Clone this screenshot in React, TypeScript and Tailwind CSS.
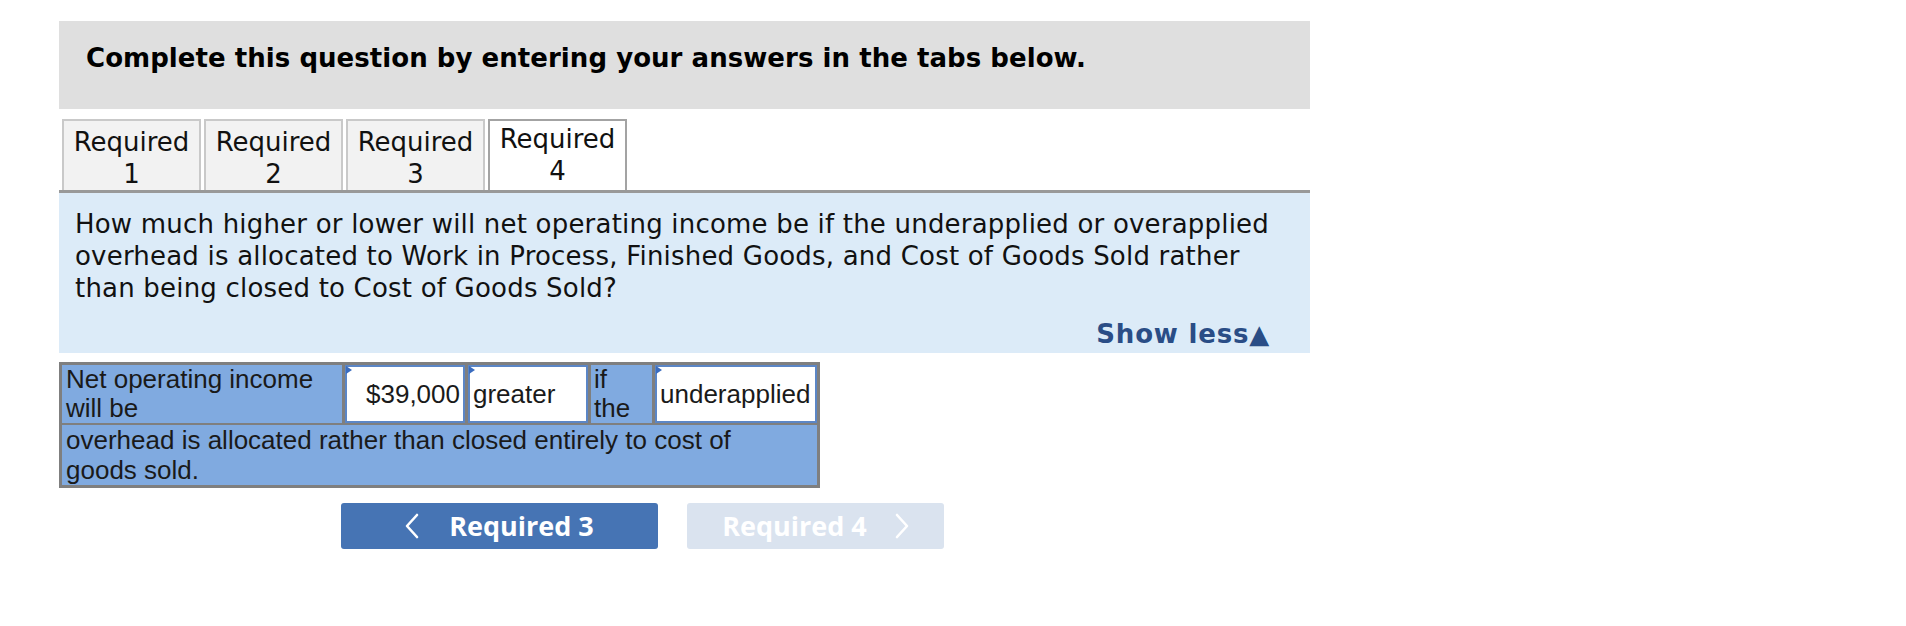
const tabs = [
    { label: 'Required', num: '1', active: false },
    { label: 'Required', num: '2', active: false },
    { label: 'Required', num: '3', active: false },
    { label: 'Required', num: '4', active: true },
];

function Chevron({ dir }: { dir: 'left' | 'right' }) {
    return (
        <svg width="14" height="26" viewBox="0 0 14 26" fill="none" stroke="currentColor" strokeWidth="2.6" strokeLinecap="round" strokeLinejoin="round">
            {dir === 'left' ? <polyline points="12,2 2,13 12,24" /> : <polyline points="2,2 12,13 2,24" />}
        </svg>
    );
}

function AnswerBox({ value, align = 'left', width }: { value: string; align?: 'left' | 'right'; width: string }) {
    return (
        <div
            className={`${width} relative bg-white border-2 border-[#5b86c6] flex items-center px-[3px] ${
                align === 'right' ? 'justify-end' : 'justify-start'
            }`}
        >
            <span className="absolute -left-[1px] -top-[1px] w-0 h-0 border-y-[4px] border-y-transparent border-l-[6px] border-l-[#3a6cbf]" />
            {value}
        </div>
    );
}

export default function App() {
    return (
        <div className="w-[1906px] h-[626px] bg-white font-['DejaVu_Sans',Verdana,sans-serif] text-[#111]">
            <div className="ml-[59px] pt-[21px] w-[1251px]">
                <div className="h-[88px] bg-[#dfdfdf] pl-[27px] pt-[22px]">
                    <h2 className="text-[26px] leading-[30px] font-bold text-black tracking-[0.05px]">
                        Complete this question by entering your answers in the tabs below.
                    </h2>
                </div>

                <div className="mt-[10px] flex items-end gap-[3px] pl-[3px] border-b-[3px] border-[#999]">
                    {tabs.map((tab, i) => (
                        <div
                            key={i}
                            className={`w-[139px] h-[71px] border-x-2 border-t-2 text-center text-[26px] leading-[32px] ${
                                tab.active
                                    ? 'bg-white border-[#a3a3a3] pt-[2px]'
                                    : 'bg-[#f2f2f2] border-[#c9c9c9] pt-[5px]'
                            }`}
                        >
                            {tab.label}
                            <br />
                            {tab.num}
                        </div>
                    ))}
                </div>

                <div className="bg-[#dcebf8] pl-[16px] pr-[40px] pt-[15px] pb-[3px]">
                    <p className="w-[1205px] text-[26px] leading-[32px] tracking-[0.2px]">
                        How much higher or lower will net operating income be if the underapplied or overapplied
                        overhead is allocated to Work in Process, Finished Goods, and Cost of Goods Sold rather
                        than being closed to Cost of Goods Sold?
                    </p>
                    <div className="mt-[14px] flex justify-end">
                        <span className="text-[26px] leading-[32px] font-bold tracking-[0.8px] text-[#2a4d86]">Show less▲</span>
                    </div>
                </div>

                <div className="mt-[9px] w-[761px] border-[3px] border-[#7f7f7f] bg-[#7f7f7f] flex flex-col gap-[2px] font-['Liberation_Sans',Arial,sans-serif] text-[26px] text-[#1a1a1a]">
                    <div className="h-[58px] flex gap-[3px]">
                        <div className="w-[280px] bg-[#80aae0] px-[4px] leading-[29px]">Net operating income will be</div>
                        <AnswerBox value="$39,000" align="right" width="w-[120px]" />
                        <AnswerBox value="greater" width="w-[120px]" />
                        <div className="w-[61px] bg-[#80aae0] px-[3px] leading-[29px]">
                            <div className="w-[44px]">if the</div>
                        </div>
                        <AnswerBox value="underapplied" width="w-[162px]" />
                    </div>
                    <div className="h-[60px] bg-[#80aae0] px-[4px] leading-[30px]">
                        overhead is allocated rather than closed entirely to cost of
                        <br />
                        goods sold.
                    </div>
                </div>

                <div className="mt-[15px] ml-[282px] flex gap-[29px] font-['Open_Sans',sans-serif] font-bold text-[27px] text-white">
                    <button className="w-[317px] h-[46px] rounded-[3px] bg-[#4674b4] flex items-center justify-center gap-[30px]">
                        <Chevron dir="left" />
                        <span>Required 3</span>
                    </button>
                    <button className="w-[257px] h-[46px] rounded-[3px] bg-[#dae3ef] flex items-center justify-center gap-[28px]">
                        <span>Required 4</span>
                        <Chevron dir="right" />
                    </button>
                </div>
            </div>
        </div>
    );
}
